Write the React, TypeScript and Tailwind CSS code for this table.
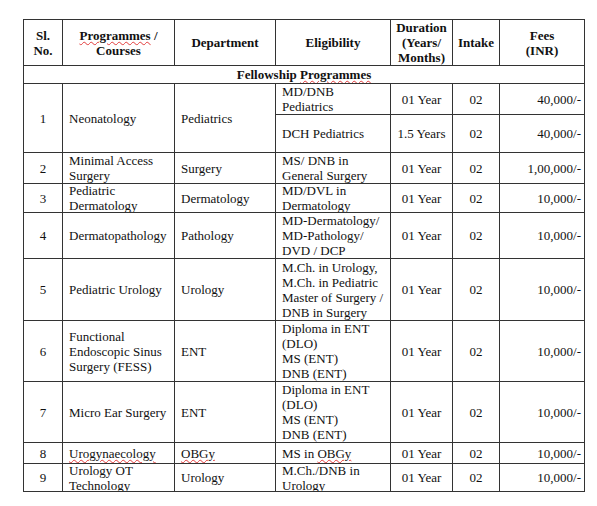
import React from 'react';

type Sub = { elig: React.ReactNode; dur: string; intake: string; fee: string };
type Course = { sl: string; prog: React.ReactNode; dept: React.ReactNode; subs: Sub[] };

// red spell-check squiggle, as in the source document
const Sp: React.FC<{ children: React.ReactNode }> = ({ children }) => (
  <span className="underline decoration-wavy decoration-[#e23b3b] decoration-1 underline-offset-[1px]">{children}</span>
);

const courses: Course[] = [
  {
    sl: '1',
    prog: 'Neonatology',
    dept: 'Pediatrics',
    subs: [
      { elig: <>MD/DNB<br />Pediatrics</>, dur: '01 Year', intake: '02', fee: '40,000/-' },
      { elig: 'DCH Pediatrics', dur: '1.5 Years', intake: '02', fee: '40,000/-' },
    ],
  },
  {
    sl: '2',
    prog: <>Minimal Access<br />Surgery</>,
    dept: 'Surgery',
    subs: [{ elig: <>MS/ DNB in<br />General Surgery</>, dur: '01 Year', intake: '02', fee: '1,00,000/-' }],
  },
  {
    sl: '3',
    prog: <>Pediatric<br />Dermatology</>,
    dept: 'Dermatology',
    subs: [{ elig: <>MD/DVL in<br />Dermatology</>, dur: '01 Year', intake: '02', fee: '10,000/-' }],
  },
  {
    sl: '4',
    prog: 'Dermatopathology',
    dept: 'Pathology',
    subs: [{ elig: <>MD-Dermatology/<br />MD-Pathology/<br />DVD / DCP</>, dur: '01 Year', intake: '02', fee: '10,000/-' }],
  },
  {
    sl: '5',
    prog: 'Pediatric Urology',
    dept: 'Urology',
    subs: [
      {
        elig: <>M.Ch. in Urology,<br />M.Ch. in Pediatric<br />Master of Surgery /<br />DNB in Surgery</>,
        dur: '01 Year',
        intake: '02',
        fee: '10,000/-',
      },
    ],
  },
  {
    sl: '6',
    prog: <>Functional<br />Endoscopic Sinus<br />Surgery (FESS)</>,
    dept: 'ENT',
    subs: [{ elig: <>Diploma in ENT<br />(DLO)<br />MS (ENT)<br />DNB (ENT)</>, dur: '01 Year', intake: '02', fee: '10,000/-' }],
  },
  {
    sl: '7',
    prog: 'Micro Ear Surgery',
    dept: 'ENT',
    subs: [{ elig: <>Diploma in ENT<br />(DLO)<br />MS (ENT)<br />DNB (ENT)</>, dur: '01 Year', intake: '02', fee: '10,000/-' }],
  },
  {
    sl: '8',
    prog: <Sp>Urogynaecology</Sp>,
    dept: <Sp>OBGy</Sp>,
    subs: [{ elig: <>MS in <Sp>OBGy</Sp></>, dur: '01 Year', intake: '02', fee: '10,000/-' }],
  },
  {
    sl: '9',
    prog: <>Urology OT<br />Technology</>,
    dept: 'Urology',
    subs: [{ elig: <>M.Ch./DNB in<br />Urology</>, dur: '01 Year', intake: '02', fee: '10,000/-' }],
  },
];

const cell = 'bg-white overflow-hidden flex items-center';

export default function App() {
  return (
    <div className="min-h-screen bg-white pt-[19px] pl-[23px] font-[family-name:Liberation_Serif,serif] text-[13px] leading-[15px] text-[#111]">
      <div className="grid w-fit grid-cols-[38px_111px_100px_114px_61px_46px_84px] grid-rows-[45px_17px_30px_37px_30px_28px_45px_61px_60px_60px_20px_27px] gap-px border border-[#333] bg-[#333]">
        {/* header */}
        <div className={`${cell} justify-center text-center font-bold`}>Sl.<br />No.</div>
        <div className={`${cell} justify-center text-center font-bold`}>
          <div><Sp>Programmes</Sp> /<br />Courses</div>
        </div>
        <div className={`${cell} justify-center text-center font-bold`}>Department</div>
        <div className={`${cell} justify-center text-center font-bold`}>Eligibility</div>
        <div className={`${cell} justify-center text-center font-bold`}>Duration<br />(Years/<br />Months)</div>
        <div className={`${cell} justify-center text-center font-bold`}>Intake</div>
        <div className={`${cell} justify-center text-center font-bold`}>Fees<br />(INR)</div>

        <div className={`${cell} col-span-7 justify-center font-bold`}>
          <span>Fellowship <Sp>Programmes</Sp></span>
        </div>

        {courses.map((c) => {
          const span = c.subs.length > 1 ? 'row-span-2' : '';
          return (
            <React.Fragment key={c.sl}>
              <div className={`${cell} ${span} justify-center`}>{c.sl}</div>
              <div className={`${cell} ${span} pl-[6px]`}><div>{c.prog}</div></div>
              <div className={`${cell} ${span} pl-[6px]`}><div>{c.dept}</div></div>
              {c.subs.map((s, i) => (
                <React.Fragment key={i}>
                  <div className={`${cell} pl-[6px]`}><div>{s.elig}</div></div>
                  <div className={`${cell} justify-center`}>{s.dur}</div>
                  <div className={`${cell} justify-center`}>{s.intake}</div>
                  <div className={`${cell} justify-end pr-[3px]`}>{s.fee}</div>
                </React.Fragment>
              ))}
            </React.Fragment>
          );
        })}
      </div>
    </div>
  );
}
